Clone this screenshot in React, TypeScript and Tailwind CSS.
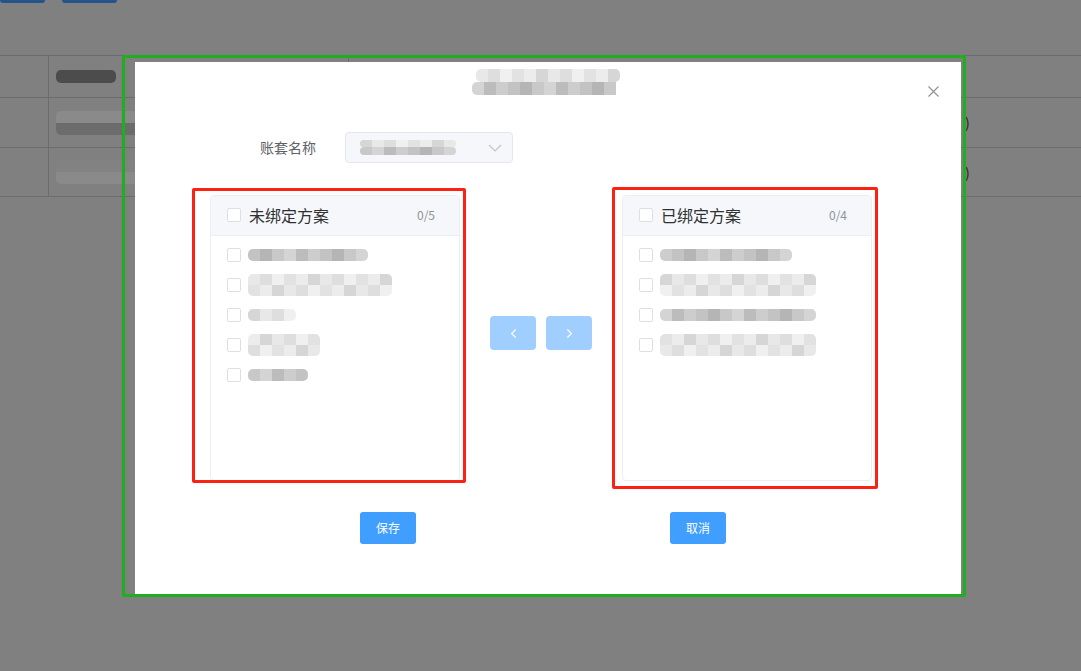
import { ChevronLeft, ChevronRight } from "lucide-react";

const FONT = { fontFamily: '"Noto Sans CJK SC", "Noto Sans", sans-serif' };

const medium = ["bg-[#c3c3c3]", "bg-[#cdcdcd]", "bg-[#bcbcbc]", "bg-[#d4d4d4]", "bg-[#c8c8c8]", "bg-[#b5b5b5]"];
const light = ["bg-[#dedede]", "bg-[#e8e8e8]", "bg-[#d6d6d6]", "bg-[#ececec]", "bg-[#e2e2e2]", "bg-[#f0f0f0]"];
const dark = ["bg-[#4c4c4c]", "bg-[#565656]", "bg-[#444]", "bg-[#5e5e5e]", "bg-[#505050]"];
const dim = ["bg-[#8a8a8a]", "bg-[#777]", "bg-[#828282]", "bg-[#6c6c6c]", "bg-[#7d7d7d]"];

const palettes = { medium, light, dark, dim };

// pixelated placeholder for masked text
function Blob({
  cols,
  rows = 1,
  seed = 0,
  tone = "medium",
  h = "h-[12px]",
}: {
  cols: number;
  rows?: number;
  seed?: number;
  tone?: keyof typeof palettes;
  h?: string;
}) {
  const pal = palettes[tone];
  return (
    <div className="flex flex-col overflow-hidden rounded-[5px] blur-[0.4px]">
      {Array.from({ length: rows }).map((_, r) => (
        <div key={r} className="flex">
          {Array.from({ length: cols }).map((_, c) => (
            <div key={c} className={`w-[12px] ${h} ${pal[(c * 5 + r * 3 + seed) % pal.length]}`} />
          ))}
        </div>
      ))}
    </div>
  );
}

function Check() {
  return <span className="block h-[14px] w-[14px] shrink-0 rounded-[2px] border border-[#dcdfe6] bg-white" />;
}

type Item = { cols: number; rows: number; tone: "medium" | "light"; seed: number };

function Panel({ title, count, items }: { title: string; count: string; items: Item[] }) {
  return (
    <div className="h-[286px] w-[250px] shrink-0 overflow-hidden rounded-[4px] border border-[#ebeef5] bg-white">
      <div className="flex h-[40px] items-center border-b border-[#ebeef5] bg-[#f5f7fa] pb-[1px] pl-[16px] pr-[24px]">
        <Check />
        <span className="ml-[8px] text-[16px] text-[#303133]">{title}</span>
        <span className="ml-auto text-[12px] text-[#909399]">{count}</span>
      </div>
      <div className="pt-[4px]">
        {items.map((it, i) => (
          <div key={i} className="flex h-[30px] items-center pl-[16px]">
            <Check />
            <div className="ml-[7px]">
              <Blob cols={it.cols} rows={it.rows} tone={it.tone} seed={it.seed} h={it.rows > 1 ? "h-[11px]" : "h-[12px]"} />
            </div>
          </div>
        ))}
      </div>
    </div>
  );
}

function TableRow({ h, blob, tail }: { h: string; blob: React.ReactNode; tail?: boolean }) {
  return (
    <div className={`flex ${h} border-b border-[#6c6c6c]`}>
      <div className="w-[49px] border-r border-[#6c6c6c]" />
      <div className="flex w-[300px] items-center border-r border-[#6c6c6c] pl-[7px]">{blob}</div>
      <div className="flex flex-1 items-center pl-[616px] text-[14px] text-[#1c1c2a]">{tail ? ")" : ""}</div>
    </div>
  );
}

export default function App() {
  return (
    <div className="relative h-[671px] w-[1081px] overflow-hidden bg-[#808080]" style={FONT}>
      {/* page underneath the mask */}
      <div className="flex h-[55px] items-start gap-[17px]">
        <div className="h-[3px] w-[45px] rounded-b-[3px] bg-[#24548a]" />
        <div className="h-[3px] w-[55px] rounded-b-[3px] bg-[#24548a]" />
      </div>
      <div className="border-t border-[#6c6c6c]">
        <TableRow h="h-[42px]" blob={<Blob cols={5} tone="dark" h="h-[13px]" />} />
        <TableRow h="h-[50px]" tail blob={<Blob cols={7} rows={2} tone="dim" />} />
        <TableRow h="h-[49px]" tail blob={<Blob cols={7} rows={2} tone="dim" seed={2} />} />
      </div>

      {/* dialog */}
      <div className="absolute left-[135px] top-[62px] h-[532px] w-[826px] bg-white">
        <button className="absolute right-[22px] top-[24px] flex h-[11px] w-[11px] items-center justify-center">
          <svg width="11" height="11" viewBox="0 0 11 11" fill="none" stroke="#909399" strokeWidth="1.2">
            <path d="M0.5 0.5L10.5 10.5M10.5 0.5L0.5 10.5" />
          </svg>
        </button>
        <div className="flex justify-center pl-[1px] pt-[7px]">
          <div className="ml-[-5px]">
            <div className="ml-[4px] flex">
              <Blob cols={12} tone="light" seed={1} h="h-[13px]" />
            </div>
            <Blob cols={12} tone="medium" seed={3} h="h-[13px]" />
          </div>
        </div>

        <div className="mt-[37px] flex h-[31px] items-center">
          <label className="w-[181px] text-right text-[14px] text-[#606266]">账套名称</label>
          <div className="ml-[29px] flex h-[31px] w-[168px] items-center rounded-[4px] border border-[#e4e7ed] bg-[#f5f7fa] pl-[14px] pr-[10px]">
            <div className="flex flex-col">
              <Blob cols={8} tone="light" seed={2} h="h-[7px]" />
              <Blob cols={8} tone="medium" seed={4} h="h-[8px]" />
            </div>
            <svg className="ml-auto" width="14" height="8" viewBox="0 0 14 8" fill="none" stroke="#c0c4cc" strokeWidth="1.2">
              <path d="M1 1L7 7L13 1" />
            </svg>
          </div>
        </div>

        <div className="ml-[75px] mt-[32px] flex items-start">
          <Panel
            title="未绑定方案"
            count="0/5"
            items={[
              { cols: 10, rows: 1, tone: "medium", seed: 0 },
              { cols: 12, rows: 2, tone: "light", seed: 1 },
              { cols: 4, rows: 1, tone: "light", seed: 2 },
              { cols: 6, rows: 2, tone: "light", seed: 3 },
              { cols: 5, rows: 1, tone: "medium", seed: 4 },
            ]}
          />
          <div className="ml-[30px] mt-[121px] flex gap-[10px]">
            <button className="flex h-[34px] w-[46px] items-center justify-center rounded-[4px] bg-[#a0cfff] text-white">
              <ChevronLeft size={15} strokeWidth={1.8} />
            </button>
            <button className="flex h-[34px] w-[46px] items-center justify-center rounded-[4px] bg-[#a0cfff] text-white">
              <ChevronRight size={15} strokeWidth={1.8} />
            </button>
          </div>
          <div className="ml-[30px]">
            <Panel
              title="已绑定方案"
              count="0/4"
              items={[
                { cols: 11, rows: 1, tone: "medium", seed: 1 },
                { cols: 13, rows: 2, tone: "light", seed: 2 },
                { cols: 13, rows: 1, tone: "medium", seed: 3 },
                { cols: 13, rows: 2, tone: "light", seed: 4 },
              ]}
            />
          </div>
        </div>

        <div className="mt-[31px] flex">
          <button className="ml-[225px] h-[32px] w-[56px] rounded-[3px] bg-[#409eff] text-[12px] text-white">保存</button>
          <button className="ml-[254px] h-[32px] w-[56px] rounded-[3px] bg-[#409eff] text-[12px] text-white">取消</button>
        </div>
      </div>

      {/* annotation frames */}
      <div className="pointer-events-none absolute left-[122px] top-[55px] h-[542px] w-[844px] rounded-[2px] border-[3px] border-[#1eae1e]" />
      <div className="pointer-events-none absolute left-[192px] top-[188px] h-[295px] w-[274px] rounded-[2px] border-[3px] border-[#fa2212]" />
      <div className="pointer-events-none absolute left-[612px] top-[187px] h-[302px] w-[266px] rounded-[2px] border-[3px] border-[#fa2212]" />
    </div>
  );
}
